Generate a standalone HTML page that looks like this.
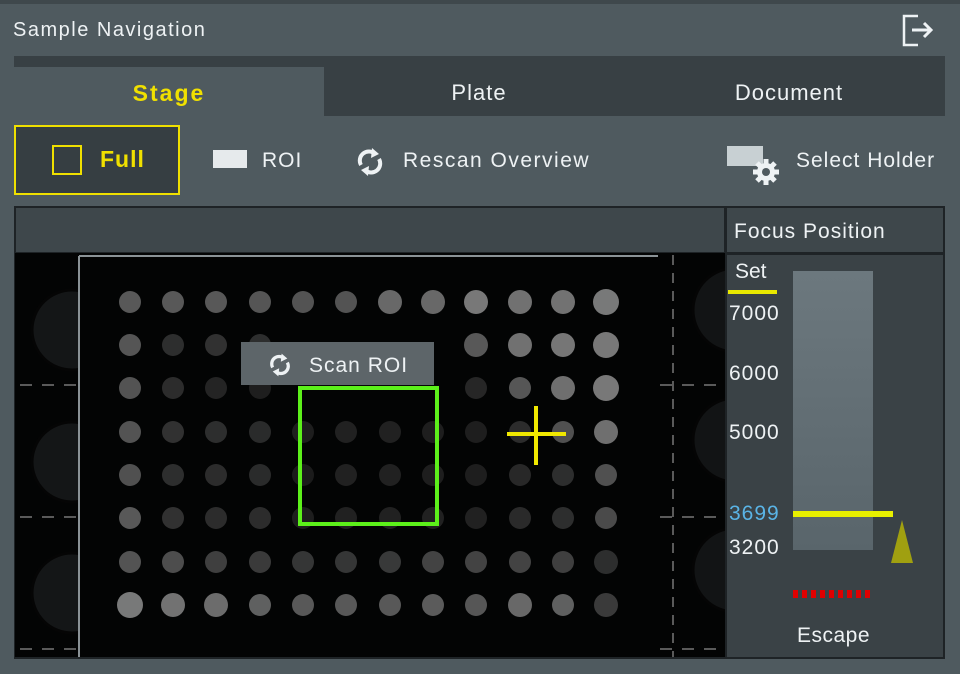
<!DOCTYPE html>
<html><head><meta charset="utf-8"><style>
*{margin:0;padding:0;box-sizing:border-box}
body{width:960px;height:674px;background:#4f5a5f;font-family:"Liberation Sans",sans-serif;position:relative;overflow:hidden;color:#eef2f4}
.a{position:absolute;white-space:nowrap}
</style></head><body>
<div class="a" style="left:0;top:0;width:960px;height:4px;background:#3f484c"></div>
<div class="a" style="left:13px;top:19px;font-size:20px;letter-spacing:1.5px">Sample Navigation</div>
<svg class="a" style="left:898px;top:10px" width="40" height="40" viewBox="0 0 40 40"><path d="M20 6H6v29h14" fill="none" stroke="#eef2f4" stroke-width="2.5"/><path d="M14 20h18M26 13l7 7-7 7" fill="none" stroke="#eef2f4" stroke-width="3"/></svg>
<div class="a" style="left:14px;top:56px;width:931px;height:60px;background:#384044"></div>
<div class="a" style="left:14px;top:67px;width:310px;height:49px;background:#4f5a5f"></div>
<div class="a" style="left:14px;top:80px;width:310px;text-align:center;font-size:23px;font-weight:bold;color:#f0e000;letter-spacing:2px">Stage</div>
<div class="a" style="left:324px;top:80px;width:310px;text-align:center;font-size:22px;letter-spacing:1px">Plate</div>
<div class="a" style="left:634px;top:80px;width:310px;text-align:center;font-size:22px;letter-spacing:1px">Document</div>
<div class="a" style="left:14px;top:125px;width:166px;height:70px;background:#363e42;border:2px solid #f0e000"></div>
<div class="a" style="left:52px;top:145px;width:30px;height:30px;border:2px solid #f0e000"></div>
<div class="a" style="left:100px;top:146px;font-size:23px;font-weight:bold;color:#f0e000;letter-spacing:1px">Full</div>
<div class="a" style="left:213px;top:150px;width:34px;height:18px;background:#e6eaec"></div>
<div class="a" style="left:262px;top:149px;font-size:21px;letter-spacing:1px">ROI</div>
<svg class="a" style="left:356px;top:146px" width="28" height="32" viewBox="0 0 28 32"><path d="M5 19A9 9 0 0 1 19 8" fill="none" stroke="#eef2f4" stroke-width="4"/><path d="M16 2l7 6-8 4z" fill="#eef2f4"/><path d="M23 13A9 9 0 0 1 9 24" fill="none" stroke="#eef2f4" stroke-width="4"/><path d="M12 30l-7-6 8-4z" fill="#eef2f4"/></svg>
<div class="a" style="left:403px;top:149px;font-size:21px;letter-spacing:1.5px">Rescan Overview</div>
<div class="a" style="left:727px;top:146px;width:36px;height:20px;background:#c8d0d3"></div>
<svg class="a" style="left:750px;top:156px" width="32" height="32" viewBox="0 0 32 32"><circle cx="16" cy="16" r="9" fill="#eef2f4"/><g stroke="#eef2f4" stroke-width="5"><path d="M16 3v26M3 16h26M7 7l18 18M25 7L7 25"/></g><circle cx="16" cy="16" r="4" fill="#4f5a5f"/></svg>
<div class="a" style="left:796px;top:149px;font-size:21px;letter-spacing:1px">Select Holder</div>
<div class="a" style="left:14px;top:206px;width:931px;height:453px;background:#1e2326"></div>
<div class="a" style="left:16px;top:208px;width:708px;height:44px;background:#3e474b"></div>
<div class="a" style="left:727px;top:208px;width:216px;height:44px;background:#3e474b"></div>
<div class="a" style="left:734px;top:220px;font-size:21px;letter-spacing:1px">Focus Position</div>
<div class="a" style="left:727px;top:255px;width:216px;height:402px;background:#3a4246"></div>
<svg class="a" style="left:15px;top:253px" width="710" height="404" viewBox="15 253 710 404">
<rect x="15" y="253" width="710" height="404" fill="#030404"/>
<defs><clipPath id="cl"><rect x="15" y="253" width="64" height="404"/></clipPath><clipPath id="cr"><rect x="690" y="253" width="36" height="404"/></clipPath></defs>
<g clip-path="url(#cl)" fill="#141617" stroke="#050505" stroke-width="3">
<circle cx="72" cy="330" r="40"/><circle cx="72" cy="462" r="40"/><circle cx="72" cy="593" r="40"/></g>
<g clip-path="url(#cr)" fill="#121415" stroke="#050505" stroke-width="3">
<circle cx="735" cy="310" r="42"/><circle cx="735" cy="440" r="42"/><circle cx="735" cy="570" r="42"/></g>
<path d="M79 256V657M79 256H658" stroke="#8a9296" stroke-width="2"/>
<path d="M673 255V657" stroke="#777" stroke-width="1.5" stroke-dasharray="10 8"/>
<g stroke="#777" stroke-width="1.5" stroke-dasharray="12 10"><path d="M20 385H78M20 517H78M20 649H78M660 385H724M660 517H724M660 649H724"/></g>
<g opacity="0.78">
<circle cx="130" cy="302" r="11" fill="#707070"/><circle cx="173" cy="302" r="11" fill="#707070"/><circle cx="216" cy="302" r="11" fill="#707070"/><circle cx="260" cy="302" r="11" fill="#6c6c6c"/><circle cx="303" cy="302" r="11" fill="#6a6a6a"/><circle cx="346" cy="302" r="11" fill="#6a6a6a"/><circle cx="390" cy="302" r="12" fill="#858585"/><circle cx="433" cy="302" r="12" fill="#858585"/><circle cx="476" cy="302" r="12" fill="#999"/><circle cx="520" cy="302" r="12" fill="#909090"/><circle cx="563" cy="302" r="12" fill="#929292"/><circle cx="606" cy="302" r="13" fill="#9a9a9a"/>
<circle cx="130" cy="345" r="11" fill="#6c6c6c"/><circle cx="173" cy="345" r="11" fill="#3a3a3a"/><circle cx="216" cy="345" r="11" fill="#3e3e3e"/><circle cx="260" cy="345" r="11" fill="#3a3a3a"/><circle cx="476" cy="345" r="12" fill="#707070"/><circle cx="520" cy="345" r="12" fill="#909090"/><circle cx="563" cy="345" r="12" fill="#979797"/><circle cx="606" cy="345" r="13" fill="#999"/>
<circle cx="130" cy="388" r="11" fill="#6a6a6a"/><circle cx="173" cy="388" r="11" fill="#383838"/><circle cx="216" cy="388" r="11" fill="#2e2e2e"/><circle cx="260" cy="388" r="11" fill="#262626"/><circle cx="476" cy="388" r="11" fill="#303030"/><circle cx="520" cy="388" r="11" fill="#6e6e6e"/><circle cx="563" cy="388" r="12" fill="#8e8e8e"/><circle cx="606" cy="388" r="13" fill="#999"/>
<circle cx="130" cy="432" r="11" fill="#6a6a6a"/><circle cx="173" cy="432" r="11" fill="#3e3e3e"/><circle cx="216" cy="432" r="11" fill="#3a3a3a"/><circle cx="260" cy="432" r="11" fill="#363636"/><circle cx="303" cy="432" r="11" fill="#262626"/><circle cx="346" cy="432" r="11" fill="#2a2a2a"/><circle cx="390" cy="432" r="11" fill="#2a2a2a"/><circle cx="433" cy="432" r="11" fill="#262626"/><circle cx="476" cy="432" r="11" fill="#262626"/><circle cx="520" cy="432" r="11" fill="#383838"/><circle cx="563" cy="432" r="11" fill="#666"/><circle cx="606" cy="432" r="12" fill="#8e8e8e"/>
<circle cx="130" cy="475" r="11" fill="#666"/><circle cx="173" cy="475" r="11" fill="#3a3a3a"/><circle cx="216" cy="475" r="11" fill="#383838"/><circle cx="260" cy="475" r="11" fill="#363636"/><circle cx="303" cy="475" r="11" fill="#222"/><circle cx="346" cy="475" r="11" fill="#2a2a2a"/><circle cx="390" cy="475" r="11" fill="#2a2a2a"/><circle cx="433" cy="475" r="11" fill="#262626"/><circle cx="476" cy="475" r="11" fill="#262626"/><circle cx="520" cy="475" r="11" fill="#333"/><circle cx="563" cy="475" r="11" fill="#3a3a3a"/><circle cx="606" cy="475" r="11" fill="#666"/>
<circle cx="130" cy="518" r="11" fill="#707070"/><circle cx="173" cy="518" r="11" fill="#3e3e3e"/><circle cx="216" cy="518" r="11" fill="#383838"/><circle cx="260" cy="518" r="11" fill="#383838"/><circle cx="303" cy="518" r="11" fill="#262626"/><circle cx="346" cy="518" r="11" fill="#2a2a2a"/><circle cx="390" cy="518" r="11" fill="#2a2a2a"/><circle cx="433" cy="518" r="11" fill="#2a2a2a"/><circle cx="476" cy="518" r="11" fill="#2a2a2a"/><circle cx="520" cy="518" r="11" fill="#353535"/><circle cx="563" cy="518" r="11" fill="#3a3a3a"/><circle cx="606" cy="518" r="11" fill="#5e5e5e"/>
<circle cx="130" cy="562" r="11" fill="#6a6a6a"/><circle cx="173" cy="562" r="11" fill="#626262"/><circle cx="216" cy="562" r="11" fill="#505050"/><circle cx="260" cy="562" r="11" fill="#4a4a4a"/><circle cx="303" cy="562" r="11" fill="#444"/><circle cx="346" cy="562" r="11" fill="#444"/><circle cx="390" cy="562" r="11" fill="#484848"/><circle cx="433" cy="562" r="11" fill="#555"/><circle cx="476" cy="562" r="11" fill="#555"/><circle cx="520" cy="562" r="11" fill="#555"/><circle cx="563" cy="562" r="11" fill="#505050"/><circle cx="606" cy="562" r="12" fill="#3a3a3a"/>
<circle cx="130" cy="605" r="13" fill="#9a9a9a"/><circle cx="173" cy="605" r="12" fill="#929292"/><circle cx="216" cy="605" r="12" fill="#8a8a8a"/><circle cx="260" cy="605" r="11" fill="#7a7a7a"/><circle cx="303" cy="605" r="11" fill="#707070"/><circle cx="346" cy="605" r="11" fill="#707070"/><circle cx="390" cy="605" r="11" fill="#707070"/><circle cx="433" cy="605" r="11" fill="#747474"/><circle cx="476" cy="605" r="11" fill="#6e6e6e"/><circle cx="520" cy="605" r="12" fill="#858585"/><circle cx="563" cy="605" r="11" fill="#7a7a7a"/><circle cx="606" cy="605" r="12" fill="#4a4a4a"/>
</g>
<rect x="241" y="342" width="193" height="43" fill="#5d6569"/>
<rect x="300" y="388" width="137" height="136" fill="none" stroke="#5cf01a" stroke-width="4"/>
<path d="M507 434H566M536 406V465" stroke="#f0e800" stroke-width="4"/>
</svg>
<svg class="a" style="left:268px;top:352px" width="24" height="26" viewBox="0 0 28 32"><path d="M5 19A9 9 0 0 1 19 8" fill="none" stroke="#eef2f4" stroke-width="4"/><path d="M16 2l7 6-8 4z" fill="#eef2f4"/><path d="M23 13A9 9 0 0 1 9 24" fill="none" stroke="#eef2f4" stroke-width="4"/><path d="M12 30l-7-6 8-4z" fill="#eef2f4"/></svg>
<div class="a" style="left:309px;top:354px;font-size:21px;letter-spacing:1px">Scan ROI</div>
<div class="a" style="left:735px;top:260px;font-size:21px">Set</div>
<div class="a" style="left:728px;top:290px;width:49px;height:4px;background:#e8e800"></div>
<div class="a" style="left:729px;top:302px;font-size:21px;letter-spacing:1px">7000</div>
<div class="a" style="left:729px;top:362px;font-size:21px;letter-spacing:1px">6000</div>
<div class="a" style="left:729px;top:421px;font-size:21px;letter-spacing:1px">5000</div>
<div class="a" style="left:729px;top:502px;font-size:21px;color:#5ab4e6;letter-spacing:1px">3699</div>
<div class="a" style="left:729px;top:536px;font-size:21px;letter-spacing:1px">3200</div>
<div class="a" style="left:793px;top:271px;width:80px;height:279px;background:linear-gradient(#6c787e,#59656b)"></div>
<div class="a" style="left:793px;top:511px;width:100px;height:6px;background:#e8f000"></div>
<svg class="a" style="left:890px;top:518px" width="26" height="46"><path d="M12 2L23 45H1z" fill="#a0a010"/></svg>
<div class="a" style="left:793px;top:590px;width:77px;height:8px;background:repeating-linear-gradient(90deg,#e00000 0 5px,transparent 5px 9px)"></div>
<div class="a" style="left:797px;top:624px;font-size:21px;letter-spacing:0.5px">Escape</div>
</body></html>
